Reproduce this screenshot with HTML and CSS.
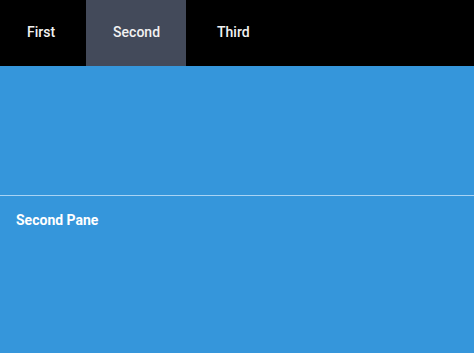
FILE: index.html
```html
<!DOCTYPE html>
<html>
<head>
<meta charset="utf-8">
<link rel="stylesheet" href="styles.css">
</head>
<body>
<div class="app">
  <nav class="tabs">
    <div class="tab">First</div>
    <div class="tab active">Second</div>
    <div class="tab">Third</div>
  </nav>
  <div class="pane top"></div>
  <div class="divider"></div>
  <div class="pane bottom">
    <div class="title">Second Pane</div>
  </div>
</div>
</body>
</html>
```
FILE: styles.css
```css
html, body {
  margin: 0;
  padding: 0;
  height: 100%;
}
body {
  font-family: Roboto, "Liberation Sans", sans-serif;
  background: #3596db;
}
.app {
  display: flex;
  flex-direction: column;
  height: 100%;
}
.tabs {
  display: flex;
  height: 66px;
  background: #000;
}
.tab {
  padding: 0 30px 2px 31px;
  line-height: 64px;
  font-size: 14px;
  font-weight: 500;
  color: #f2f2f2;
}
.tab:first-child {
  padding-left: 27px;
  padding-right: 31px;
}
.tab.active {
  background: #434a5a;
  padding-left: 27px;
  padding-right: 26px;
}
.pane {
  background: #3596db;
}
.pane.top {
  height: 129px;
}
.divider {
  height: 1px;
  background: #a8d3f4;
}
.pane.bottom {
  flex: 1;
  padding: 16px 16px;
}
.title {
  color: #fff;
  font-size: 14px;
  font-weight: 700;
}
```
